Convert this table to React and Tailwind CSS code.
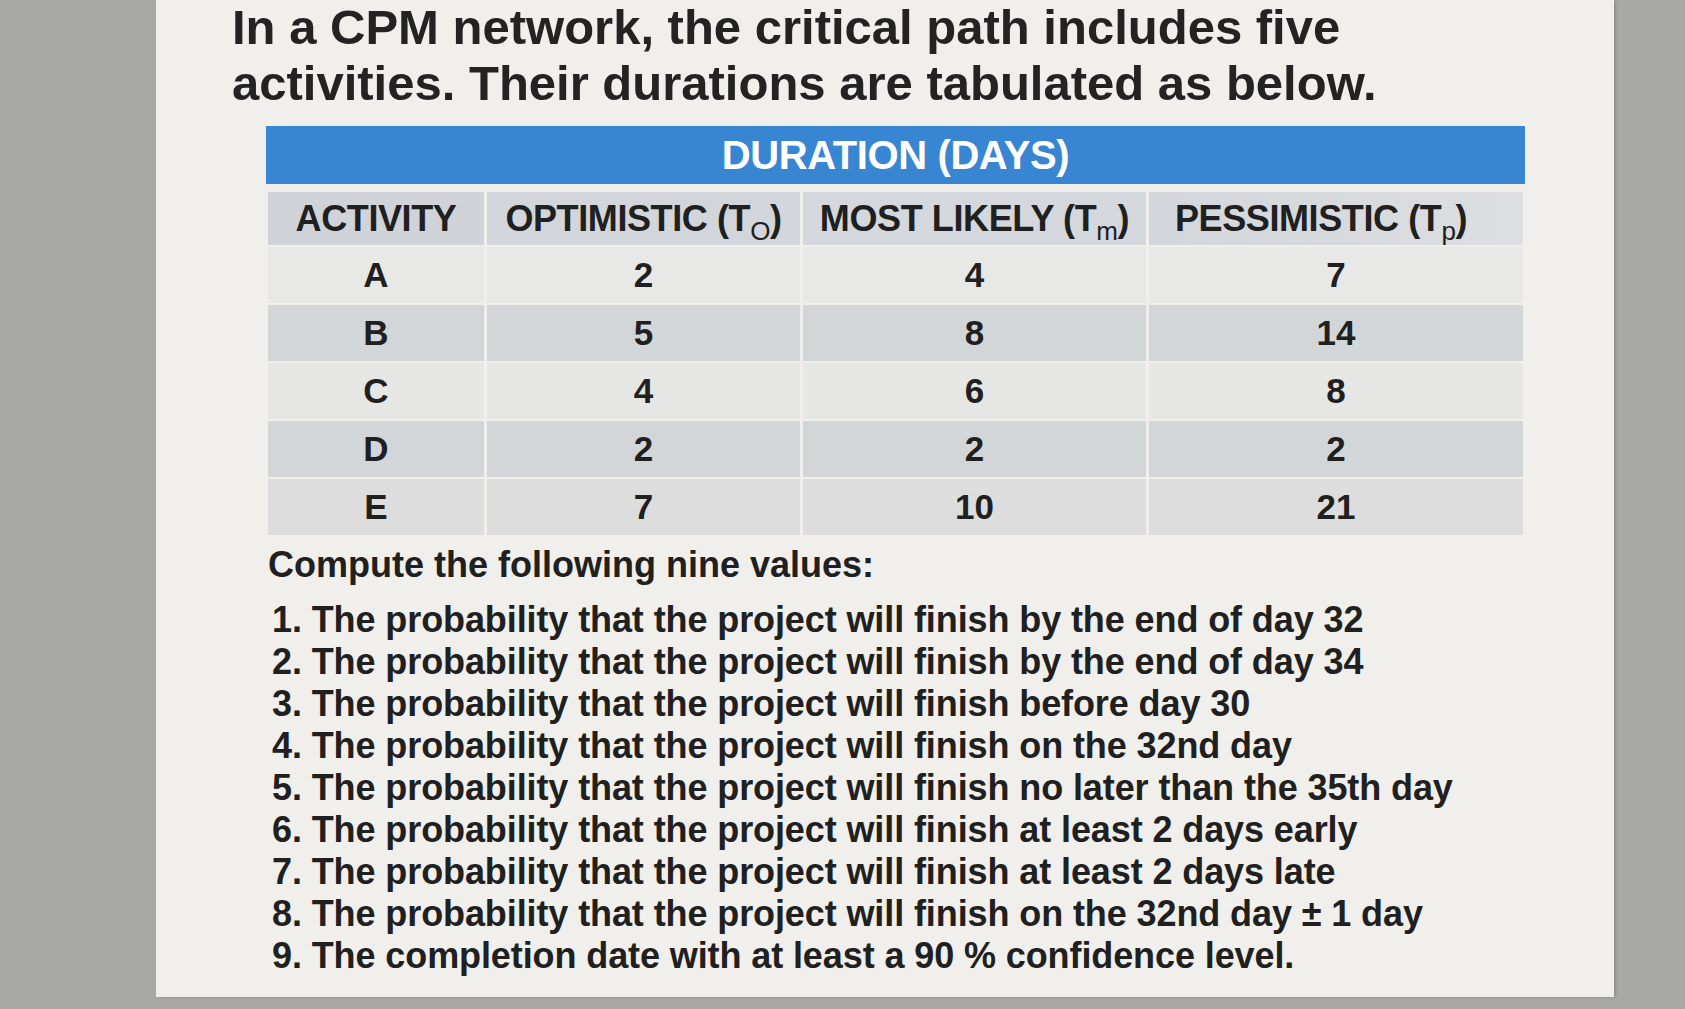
const rows = [
    { act: "A", o: "2", m: "4", p: "7", bg: "bg-[#e8e8e6]" },
    { act: "B", o: "5", m: "8", p: "14", bg: "bg-[#d3d6d9]" },
    { act: "C", o: "4", m: "6", p: "8", bg: "bg-[#e6e6e4]" },
    { act: "D", o: "2", m: "2", p: "2", bg: "bg-[#d3d6d9]" },
    { act: "E", o: "7", m: "10", p: "21", bg: "bg-[#dcdddc]" },
]

const questions = [
    "The probability that the project will finish by the end of day 32",
    "The probability that the project will finish by the end of day 34",
    "The probability that the project will finish before day 30",
    "The probability that the project will finish on the 32nd day",
    "The probability that the project will finish no later than the 35th day",
    "The probability that the project will finish at least 2 days early",
    "The probability that the project will finish at least 2 days late",
    "The probability that the project will finish on the 32nd day \u00b1 1 day",
    "The completion date with at least a 90 % confidence level.",
]

const Sub = ({ children }) => (
    <sub className="text-[26px] bottom-[-9px] font-normal">{children}</sub>
)

const App = () => {
    return (
        <div className="w-[1685px] h-[1009px] overflow-hidden bg-[#a8a8a6] font-['Liberation_Sans',Arial,sans-serif] text-[#202020]">
            {/* Paper */}
            <div className="ml-[156px] w-[1458px] h-[997px] bg-[#f0efeb] flex flex-col shadow-[2px_0_3px_rgba(0,0,0,0.15)]">
                {/* Title */}
                <div className="pl-[76px] pt-[2px] text-[49px] font-bold text-[#232323]">
                    <p className="leading-[50px]">In a CPM network, the critical path includes five</p>
                    <p className="leading-[59px] mt-[2px]">activities. Their durations are tabulated as below.</p>
                </div>

                {/* Table */}
                <div className="ml-[110px] w-[1259px] mt-[13px]">
                    <div className="h-[58px] bg-[#3886d2] flex items-center justify-center text-white text-[40px] font-bold tracking-[-0.4px]">
                        DURATION (DAYS)
                    </div>
                    <div className="ml-[2px] w-[1255px] mt-[8px] grid grid-cols-[216px_313px_343px_374px] gap-x-[3px] gap-y-[2px] font-bold">
                        <div className="h-[53px] bg-[#d0d3d7] flex items-center justify-center text-[36px] tracking-[-0.4px]">ACTIVITY</div>
                        <div className="h-[53px] bg-[#d2d5d9] flex items-center justify-center text-[36px] tracking-[-0.4px] whitespace-nowrap">
                            <span>OPTIMISTIC (T<Sub>O</Sub>)</span>
                        </div>
                        <div className="h-[53px] bg-[#d4d7db] flex items-center justify-center text-[36px] tracking-[-0.4px] whitespace-nowrap">
                            <span>MOST LIKELY (T<Sub>m</Sub>)</span>
                        </div>
                        <div className="h-[53px] bg-gradient-to-r from-[#d3d6da] to-[#dcdee1] flex items-center justify-center text-[36px] tracking-[-0.4px] whitespace-nowrap pr-[30px]">
                            <span>PESSIMISTIC (T<Sub>p</Sub>)</span>
                        </div>

                        {rows.map((r) => (
                            [r.act, r.o, r.m, r.p].map((v, i) => (
                                <div key={r.act + i} className={`h-[56px] ${r.bg} flex items-center justify-center text-[35px]`}>
                                    {v}
                                </div>
                            ))
                        ))}
                    </div>
                </div>

                {/* Questions */}
                <p className="ml-[112px] mt-[9px] text-[36px] leading-[42px] font-bold">Compute the following nine values:</p>
                <ol className="ml-[116px] mt-[13px] text-[36px] leading-[42px] font-bold tracking-[-0.1px]">
                    {questions.map((q, i) => (
                        <li key={i} className="whitespace-nowrap">{i + 1}. {q}</li>
                    ))}
                </ol>
            </div>
        </div>
    )
}

export default App
